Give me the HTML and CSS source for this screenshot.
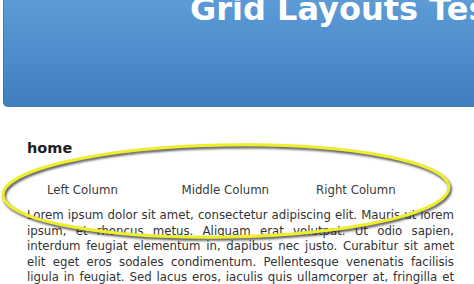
FILE: index.html
```html
<!DOCTYPE html>
<html>
<head>
<meta charset="utf-8">
<link rel="stylesheet" href="styles.css">
</head>
<body>
<div class="page">
  <header class="masthead">
    <h1 class="site-title">Grid Layouts Test</h1>
  </header>
  <main class="content">
    <h2 class="page-title">home</h2>
    <div class="columns">
      <div class="col">Left Column</div>
      <div class="col">Middle Column</div>
      <div class="col">Right Column</div>
    </div>
    <p class="lorem">Lorem ipsum dolor sit amet, consectetur adipiscing elit. Mauris ut lorem ipsum, et rhoncus metus. Aliquam erat volutpat. Ut odio sapien, interdum feugiat elementum in, dapibus nec justo. Curabitur sit amet elit eget eros sodales condimentum. Pellentesque venenatis facilisis ligula in feugiat. Sed lacus eros, iaculis quis ullamcorper at, fringilla et nulla. Nam sit amet lorem eget velit commodo tincidunt.</p>
  </main>
  <svg class="annotation" width="474" height="284" viewBox="0 0 474 284">
    <defs>
      <filter id="soft" x="-10%" y="-30%" width="120%" height="160%">
        <feGaussianBlur stdDeviation="0.9"/>
      </filter>
    </defs>
    <g transform="rotate(-1 226 191)">
      <ellipse cx="227.3" cy="193" rx="223" ry="46" fill="none" stroke="#2e2e2e" stroke-opacity="0.85" stroke-width="3" filter="url(#soft)"/>
      <ellipse cx="226" cy="191" rx="223" ry="46" fill="none" stroke="#eeee2c" stroke-width="3"/>
    </g>
  </svg>
</div>
</body>
</html>
```
FILE: styles.css
```css
html, body {
  margin: 0;
  padding: 0;
  background: #ffffff;
}
body {
  width: 474px;
  height: 284px;
  overflow: hidden;
}
.page {
  position: relative;
  width: 474px;
  height: 284px;
  overflow: hidden;
  font-family: "DejaVu Sans", Verdana, sans-serif;
}
.masthead {
  margin-left: 3px;
  width: 520px;
  height: 107px;
  border-bottom-left-radius: 5px;
  background: linear-gradient(to bottom, #5c9bd6 0%, #4e8dcb 50%, #3f7ebd 100%);
  box-shadow: inset 1px 0 0 rgba(40, 90, 150, 0.35);
  overflow: hidden;
}
.site-title {
  margin: -6px 0 0 187px;
  font-family: "DejaVu Sans", Verdana, sans-serif;
  font-weight: bold;
  font-size: 32px;
  line-height: 30px;
  color: #ffffff;
  white-space: nowrap;
}
.content {
  padding: 32px 0 0 27px;
  width: 427px;
}
.page-title {
  margin: 0;
  font-size: 14.5px;
  line-height: 18px;
  font-weight: bold;
  color: #1e1e1e;
}
.columns {
  display: flex;
  margin-top: 25px;
  font-size: 11.75px;
  line-height: 16px;
  color: #3a3a3a;
}
.col {
  width: 134.5px;
  padding-left: 20px;
  box-sizing: border-box;
  white-space: nowrap;
}
.lorem {
  margin: 10px 0 0 0;
  font-size: 11.75px;
  line-height: 15.5px;
  color: #333333;
  text-align: justify;
}
.annotation {
  position: absolute;
  left: 0;
  top: 0;
  pointer-events: none;
}
```
